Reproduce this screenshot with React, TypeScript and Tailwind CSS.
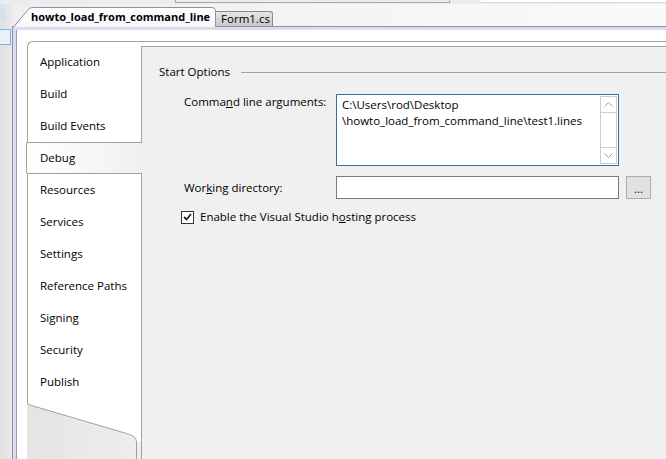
import React from "react";

const pages = [
  "Application",
  "Build",
  "Build Events",
  "Debug",
  "Resources",
  "Services",
  "Settings",
  "Reference Paths",
  "Signing",
  "Security",
  "Publish",
];

function Chevron({ up }: { up?: boolean }) {
  return (
    <svg width="9" height="5" viewBox="0 0 9 5" className="block">
      <path
        d={up ? "M0.5 4.5 L4.5 0.5 L8.5 4.5" : "M0.5 0.5 L4.5 4.5 L8.5 0.5"}
        fill="none"
        stroke="#9a9a9a"
      />
    </svg>
  );
}

function DocTabs() {
  return (
    <div className="flex h-[22px] shrink-0 items-end bg-gradient-to-r from-[#efefef] to-[#fafafa] pl-[1px]">
      <div className="relative z-10 mb-[-1px] flex h-[20px] w-[203px] items-center pl-[18px] font-bold text-[11px]">
        <svg width="203" height="20" viewBox="0 0 203 20" className="absolute inset-0">
          <defs>
            <linearGradient id="tabfill" x1="0" y1="0" x2="0" y2="1">
              <stop offset="0" stopColor="#ffffff" />
              <stop offset="1" stopColor="#f6f6fb" />
            </linearGradient>
          </defs>
          <path
            d="M0.5 20 L14 4 Q16 0.5 19.5 0.5 L199 0.5 Q202.5 0.5 202.5 4 L202.5 20"
            fill="url(#tabfill)"
            stroke="#8f8fa8"
          />
        </svg>
        <span className="relative">howto_load_from_command_line</span>
      </div>
      <div className="ml-[-1px] flex h-[15px] w-[58px] items-center justify-center rounded-tr-[3px] border border-b-0 border-[#8a8a8a] bg-gradient-to-b from-[#e6e6e6] to-[#c9c9c9] pl-[3px] text-[11.5px]">
        Form1.cs
      </div>
    </div>
  );
}

function PageList() {
  return (
    <div className="flex w-[114px] shrink-0 flex-col">
      <div className="flex flex-col rounded-tl-[6px] border-l border-t border-[#a0a0a0] bg-white pb-[4px] pt-[4px]">
        {pages.map((p) =>
          p === "Debug" ? (
            <div
              key={p}
              className="relative z-10 -ml-[2px] -mr-[1px] flex h-[32px] items-center rounded-l-[2px] border-y border-l border-[#a0a0a0] bg-gradient-to-r from-white to-[#f0f0f0] pl-[13px]"
            >
              {p}
            </div>
          ) : (
            <div key={p} className="flex h-[32px] items-center pl-[12px]">
              {p}
            </div>
          )
        )}
      </div>
      <div className="flex-1 overflow-hidden">
        <svg width="114" height="60" viewBox="0 0 114 60" className="block">
          <defs>
            <linearGradient id="slant" x1="0" y1="0" x2="1" y2="0">
              <stop offset="0" stopColor="#e4e4e4" />
              <stop offset="1" stopColor="#eeeeee" />
            </linearGradient>
          </defs>
          <rect x="0" y="0" width="114" height="60" fill="url(#slant)" />
          <path d="M0 0 L0.5 0 Q0.5 3 4.5 3.5 L99.5 31.5 Q109.5 34 109.5 40 L114 40 L114 0 Z" fill="#ffffff" />
          <path
            d="M0.5 0 Q0.5 3 4.5 3.5 L99.5 31.5 Q109.5 34 109.5 40 L109.5 60"
            fill="none"
            stroke="#a0a0a0"
          />
        </svg>
      </div>
    </div>
  );
}

function DebugPage() {
  return (
    <div className="flex-1 border-l border-t border-[#a0a0a0] bg-[#f0f0f0] pl-[17px] pt-[17px]">
      <div className="flex h-[16px] items-center">
        <span>Start Options</span>
        <div className="ml-[11px] h-px flex-1 bg-[#a0a0a0]" />
      </div>

      <div className="ml-[25px] mt-[14px] flex items-start">
        <div className="w-[152px] leading-[16px]">
          Comma<span className="underline">n</span>d line arguments:
        </div>
        <div className="flex h-[72px] w-[283px] border border-[#3b6ea0] bg-white">
          <div className="flex-1 pl-[5px] pt-[2px] leading-[16px]">
            <div>C:\Users\rod\Desktop</div>
            <div>\howto_load_from_command_line\test1.lines</div>
          </div>
          <div className="my-[1px] mr-[1px] flex w-[17px] flex-col border border-[#cdcdcd]">
            <div className="flex h-[16px] items-center justify-center border-b border-[#cdcdcd]">
              <Chevron up />
            </div>
            <div className="flex-1" />
            <div className="flex h-[16px] items-center justify-center border-t border-[#cdcdcd]">
              <Chevron />
            </div>
          </div>
        </div>
      </div>

      <div className="ml-[25px] mt-[10px] flex items-center">
        <div className="w-[152px]">
          Wor<span className="underline">k</span>ing directory:
        </div>
        <div className="h-[23px] w-[283px] border border-[#7a7a7a] bg-white" />
        <div className="ml-[7px] flex h-[23px] w-[25px] items-center justify-center border border-[#adadad] bg-[#e1e1e1] pt-[3px] leading-none">
          ...
        </div>
      </div>

      <div className="ml-[22px] mt-[10px] flex h-[16px] items-center">
        <div className="flex h-[13px] w-[13px] items-center justify-center border border-[#333333] bg-white">
          <svg width="9" height="8" viewBox="0 0 9 8" className="block">
            <path d="M1 4 L3.5 6.5 L8 1" fill="none" stroke="#222222" strokeWidth="1.8" />
          </svg>
        </div>
        <span className="ml-[6px]">
          Enable the Visual Studio h<span className="underline">o</span>sting process
        </span>
      </div>
    </div>
  );
}

export default function App() {
  return (
    <div className="flex h-[459px] w-[666px] flex-col overflow-hidden bg-[#f0f0f0] font-['Open_Sans',sans-serif] text-[11.5px] text-black">
      {/* toolbar remnants */}
      <div className="flex h-[4px] shrink-0 bg-[#ececec]">
        <div className="w-[175px]" />
        <div className="h-[3px] w-[275px] border-x border-b border-[#a8a8a8]" />
        <div className="w-[31px]" />
        <div className="h-[3px] flex-1 border-b border-[#dcdcdc] bg-white" />
      </div>

      <div className="flex min-h-0 flex-1">
        {/* solution explorer edge */}
        <div className="flex w-[12px] shrink-0 flex-col bg-gradient-to-r from-[#e0e0e0] to-[#eaeaea]">
          <div className="ml-[1px] mt-[4px] h-[12px] w-[4px] bg-[#cfe2f3]" />
          <div className="mt-[9px] h-[16px] w-[11px] border border-l-0 border-[#7db6e6] bg-[#e6f2fb]" />
        </div>

        <div className="flex min-w-0 flex-1 flex-col">
          <DocTabs />
          <div className="flex min-h-0 flex-1 border-l border-t border-[#8e8eb6] bg-[#dcdcec] pl-[3px] pt-[3px]">
            <div className="flex min-h-0 flex-1 border-l border-[#9a9ac0] bg-white pl-[10px] pt-[11px]">
              <PageList />
              <div className="flex min-w-0 flex-1 flex-col border-t border-[#a0a0a0] bg-white pt-[4px]">
                <DebugPage />
              </div>
            </div>
          </div>
        </div>
      </div>
    </div>
  );
}
